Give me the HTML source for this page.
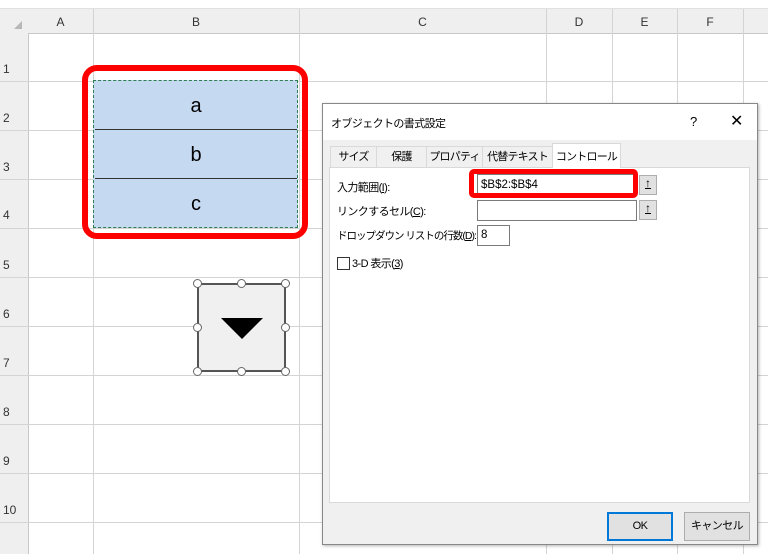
<!DOCTYPE html><html><head><meta charset="utf-8"><style>
body{margin:0;width:768px;height:554px;overflow:hidden;background:#fff;position:relative;font-family:"Liberation Sans","Noto Sans CJK JP",sans-serif;}
.a{position:absolute;}
.hl{position:absolute;background:#d4d4d4;}
.lbl{position:absolute;font-size:12px;color:#333;text-align:center;}
.d{font-size:11px;color:#000;white-space:nowrap;letter-spacing:-0.6px;}
.tab{position:absolute;top:146px;height:21px;border:1px solid #d9d9d9;border-bottom:none;background:#f0f0f0;font-size:11px;letter-spacing:-0.8px;white-space:nowrap;text-align:center;line-height:21px;box-sizing:border-box;}
.inp{position:absolute;background:#fff;border:1px solid #7a7a7a;box-sizing:border-box;font-size:11.5px;line-height:18px;padding-left:3px;}
.btn{position:absolute;width:18px;height:20px;background:#e1e1e1;border:1px solid #adadad;box-sizing:border-box;font-size:12px;font-weight:bold;text-align:center;line-height:15px;}
.h{position:absolute;width:7px;height:7px;border:1.5px solid #666;border-radius:50%;background:#fff;}
</style></head><body>
<div class="a" style="left:0;top:0;width:768px;height:8px;background:#fff;border-bottom:1px solid #e0e0e0"></div>
<div class="a" style="left:0;top:9px;width:768px;height:24px;background:#efefef;border-bottom:1px solid #c8c8c8"></div>
<div class="a" style="left:0;top:33px;width:28px;height:521px;background:#efefef;border-right:1px solid #c8c8c8"></div>
<div class="a" style="left:14px;top:21px;width:0;height:0;border-left:8px solid transparent;border-bottom:8px solid #b8b8b8"></div>
<div class="hl" style="left:93px;top:9px;width:1px;height:545px"></div>
<div class="hl" style="left:299px;top:9px;width:1px;height:545px"></div>
<div class="hl" style="left:546px;top:9px;width:1px;height:545px"></div>
<div class="hl" style="left:612px;top:9px;width:1px;height:545px"></div>
<div class="hl" style="left:677px;top:9px;width:1px;height:545px"></div>
<div class="hl" style="left:743px;top:9px;width:1px;height:545px"></div>
<div class="lbl" style="left:28px;top:15px;width:65px">A</div>
<div class="lbl" style="left:93px;top:15px;width:206px">B</div>
<div class="lbl" style="left:299px;top:15px;width:247px">C</div>
<div class="lbl" style="left:546px;top:15px;width:66px">D</div>
<div class="lbl" style="left:612px;top:15px;width:65px">E</div>
<div class="lbl" style="left:677px;top:15px;width:66px">F</div>
<div class="hl" style="left:0;top:81px;width:768px;height:1px"></div>
<div class="hl" style="left:0;top:130px;width:768px;height:1px"></div>
<div class="hl" style="left:0;top:179px;width:768px;height:1px"></div>
<div class="hl" style="left:0;top:228px;width:768px;height:1px"></div>
<div class="hl" style="left:0;top:277px;width:768px;height:1px"></div>
<div class="hl" style="left:0;top:326px;width:768px;height:1px"></div>
<div class="hl" style="left:0;top:375px;width:768px;height:1px"></div>
<div class="hl" style="left:0;top:424px;width:768px;height:1px"></div>
<div class="hl" style="left:0;top:473px;width:768px;height:1px"></div>
<div class="hl" style="left:0;top:522px;width:768px;height:1px"></div>
<div class="lbl" style="left:3px;top:62px">1</div>
<div class="lbl" style="left:3px;top:111px">2</div>
<div class="lbl" style="left:3px;top:160px">3</div>
<div class="lbl" style="left:3px;top:208px">4</div>
<div class="lbl" style="left:3px;top:258px">5</div>
<div class="lbl" style="left:3px;top:307px">6</div>
<div class="lbl" style="left:3px;top:356px">7</div>
<div class="lbl" style="left:3px;top:405px">8</div>
<div class="lbl" style="left:3px;top:454px">9</div>
<div class="lbl" style="left:3px;top:503px">10</div>
<div class="a" style="left:93px;top:80px;width:205px;height:148px;background:#c5d9f1;border:1.5px dashed #2e7d4f;box-sizing:border-box"></div>
<div class="a" style="left:95px;top:129px;width:202px;height:1px;background:#333"></div>
<div class="a" style="left:95px;top:178px;width:202px;height:1px;background:#333"></div>
<div class="a" style="left:95px;top:95px;width:202px;text-align:center;font-size:20px">a</div>
<div class="a" style="left:95px;top:144px;width:202px;text-align:center;font-size:20px">b</div>
<div class="a" style="left:95px;top:193px;width:202px;text-align:center;font-size:20px">c</div>
<div class="a" style="left:82px;top:65px;width:226px;height:174px;border:6px solid #f00;border-radius:15px;box-sizing:border-box"></div>
<div class="a" style="left:197px;top:283px;width:89px;height:89px;background:#f0f0f0;border:2px solid #555;box-sizing:border-box"></div>
<div class="a" style="left:221px;top:318px;width:0;height:0;border-left:21px solid transparent;border-right:21px solid transparent;border-top:21px solid #000"></div>
<div class="h" style="left:193px;top:279px"></div><div class="h" style="left:237px;top:279px"></div><div class="h" style="left:281px;top:279px"></div>
<div class="h" style="left:193px;top:323px"></div><div class="h" style="left:281px;top:323px"></div>
<div class="h" style="left:193px;top:367px"></div><div class="h" style="left:237px;top:367px"></div><div class="h" style="left:281px;top:367px"></div>
<div class="a" style="left:322px;top:103px;width:436px;height:442px;background:#f0f0f0;border:1px solid #888;box-sizing:border-box;box-shadow:1px 1px 3px rgba(0,0,0,.3)"></div>
<div class="a" style="left:323px;top:104px;width:434px;height:36px;background:#fff"></div>
<div class="a d" style="left:331px;top:115px">オブジェクトの書式設定</div>
<div class="a d" style="left:690px;top:114px;font-size:13px">?</div>
<div class="a d" style="left:730px;top:111px;font-size:16px">✕</div>
<div class="a" style="left:329px;top:167px;width:421px;height:336px;background:#fff;border:1px solid #d9d9d9;box-sizing:border-box"></div>
<div class="tab" style="left:330px;width:47px">サイズ</div>
<div class="tab" style="left:376px;width:51px">保護</div>
<div class="tab" style="left:426px;width:57px">プロパティ</div>
<div class="tab" style="left:482px;width:71px">代替テキスト</div>
<div class="tab" style="left:552px;width:69px;top:143px;height:25px;line-height:26px;background:#fff">コントロール</div>
<div class="a d" style="left:337px;top:179px">入力範囲(<u>I</u>):</div>
<div class="a d" style="left:337px;top:203px">リンクするセル(<u>C</u>):</div>
<div class="a d" style="left:337px;top:228px;font-size:10.5px;letter-spacing:-1px">ドロップダウン リストの行数(<u>D</u>):</div>
<div class="a" style="left:337px;top:257px;width:11px;height:11px;border:1px solid #333;background:#fff"></div>
<div class="a d" style="left:352px;top:255px">3-D 表示(<u>3</u>)</div>
<div class="inp" style="left:477px;top:174px;width:160px;height:22px;line-height:20px">$B$2:$B$4</div>
<div class="inp" style="left:477px;top:200px;width:160px;height:21px"></div>
<div class="inp" style="left:477px;top:225px;width:33px;height:21px">8</div>
<div class="btn" style="left:639px;top:175px"><u>↑</u></div>
<div class="btn" style="left:639px;top:200px"><u>↑</u></div>
<div class="a" style="left:469px;top:169px;width:169px;height:29px;border:5px solid #f00;border-radius:5px;box-sizing:border-box"></div>
<div class="a d" style="left:607px;top:512px;width:66px;height:29px;border:2px solid #0078d7;background:#e1e1e1;box-sizing:border-box;text-align:center;line-height:25px">OK</div>
<div class="a d" style="left:684px;top:512px;width:66px;height:29px;border:1px solid #adadad;background:#e1e1e1;box-sizing:border-box;text-align:center;line-height:27px">キャンセル</div>
</body></html>
